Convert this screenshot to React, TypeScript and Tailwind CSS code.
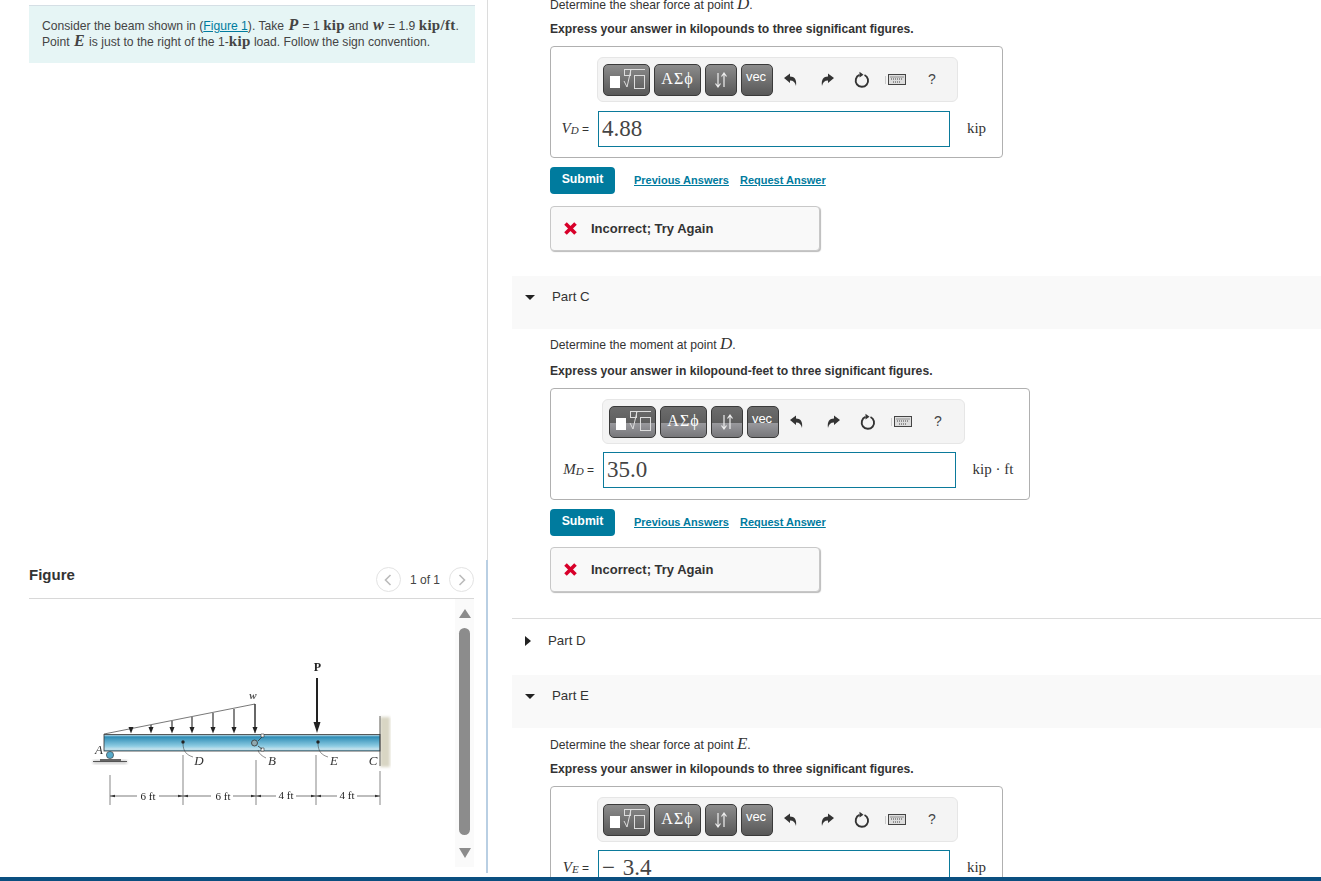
const serif = "[font-family:'Liberation_Serif',serif]";
const mathVar = `${serif} italic font-bold text-[16px] leading-none mx-[1px]`;
const mathUnit = `${serif} font-bold text-[15px] leading-none tracking-[0.3px]`;
const pointVar = `${serif} italic text-[17px] leading-none`;

function ToolBtn({ w, twoTone, children }: { w: string; twoTone?: boolean; children: React.ReactNode }) {
    const bg = twoTone
        ? 'bg-[linear-gradient(#6c6c6c_0%,#5e5e5e_54%,#98989c_55%,#77777a_100%)]'
        : 'bg-gradient-to-b from-[#8c8c8c] to-[#585858]'
    return (
        <div className={`${w} h-8 flex items-center justify-center rounded-[5px] border border-[#3a3a3a] ${bg} text-white`}>
            {children}
        </div>
    )
}

function Toolbar({ width, pad, twoTone }: { width: string; pad: string; twoTone?: boolean }) {
    return (
        <div className={`${width} ${pad} h-[45px] flex items-center rounded-md border border-[#e6e6e6] bg-[#f4f4f4]`}>
            <div className="flex gap-1">
                <ToolBtn w="w-[47px]" twoTone={twoTone}>
                    <svg width="45" height="30" viewBox="0 0 45 30">
                        <rect x="6" y="11" width="10" height="12" fill="#fff" />
                        <rect x="20.5" y="4.5" width="6" height="6" fill="none" stroke="#ddd" />
                        <path d="M20 16 L23 22 L27 4.5 H41" fill="none" stroke="#ddd" />
                        <rect x="30.5" y="10.5" width="10" height="13" fill="none" stroke="#ddd" />
                    </svg>
                </ToolBtn>
                <ToolBtn w="w-[47px]" twoTone={twoTone}>
                    <span className={`${serif} text-[16px] tracking-[1px] -mt-0.5`}>ΑΣϕ</span>
                </ToolBtn>
                <ToolBtn w="w-[32px]" twoTone={twoTone}>
                    <svg width="16" height="18" viewBox="0 0 16 18" fill="none" stroke="#eee" strokeWidth="1.2">
                        <path d="M5 2 V15 M2.5 12.5 L5 16 L7.5 12.5" />
                        <path d="M11 16 V3 M8.5 5.5 L11 2 L13.5 5.5" />
                    </svg>
                </ToolBtn>
                <ToolBtn w="w-[32px]" twoTone={twoTone}>
                    <span className="text-[13px] -mt-1.5 -ml-0.5">vec</span>
                </ToolBtn>
            </div>
            <svg className="ml-[10px]" width="16" height="16" viewBox="0 0 16 16" fill="#333">
                <path d="M1 6 L7 1.5 V4.5 C11.5 4.5 14 7.5 13 14 C12.3 10.5 10.5 8.5 7 8.5 V11 Z" />
            </svg>
            <svg className="ml-[20px]" width="16" height="16" viewBox="0 0 16 16" fill="#333">
                <path d="M15 6 L9 1.5 V4.5 C4.5 4.5 2 7.5 3 14 C3.7 10.5 5.5 8.5 9 8.5 V11 Z" />
            </svg>
            <svg className="ml-[18px]" width="18" height="18" viewBox="0 0 18 18" fill="none" stroke="#333" strokeWidth="1.9">
                <path d="M11.5 4 A6.2 6.2 0 1 1 6.5 3.9" />
                <path d="M6.5 0.8 L10.5 3.8 L6.5 6.5 Z" fill="#333" stroke="none" />
            </svg>
            <div className="ml-[14px] w-px h-[8px] bg-[#ccc]" />
            <svg className="ml-[2px]" width="18" height="11" viewBox="0 0 18 11" fill="#ddd" stroke="#444">
                <rect x="0.5" y="0.5" width="17" height="10" />
                <path d="M2.5 3 H15.5 M3 5 H15 M5 8 H13" strokeDasharray="1 1" />
            </svg>
            <span className="ml-[22px] text-[14px] text-[#444]">?</span>
        </div>
    )
}

function AnswerBox({ width, barWidth, barLeft, barPad, label, sub, value, unit, labelWidth, inputWidth, unitWidth, inputTop, twoTone }: {
    width: string; barWidth: string; barLeft: string; barPad: string; label: string; sub: string; value: string; unit: string
    labelWidth: string; inputWidth: string; unitWidth: string; inputTop: string; twoTone?: boolean
}) {
    return (
        <div className={`${width} h-28 shrink-0 rounded border border-[#b0b0b0] pt-[10px]`}>
            <div className={barLeft}>
                <Toolbar width={barWidth} pad={barPad} twoTone={twoTone} />
            </div>
            <div className={`flex items-center ${inputTop}`}>
                <div className={`${labelWidth} pr-[9px] text-right text-xs text-[#333] whitespace-nowrap shrink-0`}>
                    <span className={`${serif} italic text-[15px]`}>{label}</span>
                    <span className={`${serif} italic text-[11px] relative top-px`}>{sub}</span> =
                </div>
                <div className={`${inputWidth} h-[36px] shrink-0 border border-[#0b7a9b] pl-[3px] ${serif} text-[23px] leading-[34px] text-[#444]`}>{value}</div>
                <div className={`${unitWidth} text-center ${serif} text-[15px] text-[#333] shrink-0 -mt-0.5`}>{unit}</div>
            </div>
        </div>
    )
}

function SubmitRow() {
    return (
        <div className="flex items-center gap-[19px]">
            <div className="w-[65px] h-[27px] rounded-sm bg-[#007b9e] text-white text-[12.3px] font-bold flex items-center justify-center pb-0.5">Submit</div>
            <div className="flex gap-[11px] text-[11px] font-bold text-[#007b9e] underline">
                <span>Previous Answers</span>
                <span>Request Answer</span>
            </div>
        </div>
    )
}

function Feedback() {
    return (
        <div className="w-[270px] h-[45px] rounded border border-[#c8c8c8] bg-[#f9f9f9] shadow-[1px_1px_1px_#bbb] flex items-center pl-[13px] text-[13px] font-bold text-[#333]">
            <svg width="13" height="13" viewBox="0 0 13 13" stroke="#d8002a" strokeWidth="3.6">
                <path d="M1.5 1.5 L11.5 11.5 M11.5 1.5 L1.5 11.5" />
            </svg>
            <span className="ml-[14px] mt-px">Incorrect; Try Again</span>
        </div>
    )
}

function PartHeader({ name }: { name: string }) {
    return (
        <div className="h-[53px] shrink-0 bg-[#f9f9f9] flex items-center pl-[13px] pb-[11px] text-[13.3px] text-[#333]">
            <div className="w-0 h-0 border-x-[5px] border-x-transparent border-t-[5px] border-t-[#222]" />
            <span className="ml-[17px]">{name}</span>
        </div>
    )
}

function Beam() {
    const load = [[131, 729], [151, 725], [172, 721], [192, 717], [213, 713], [234, 709], [255, 704]]
    const dims = [[110, 775], [183, 755], [256, 760], [316, 755], [380, 771]]
    return (
        <svg width="310" height="170" viewBox="90 650 310 170" className="blur-[0.3px] [font-family:'Liberation_Serif',serif]">
            <defs>
                <linearGradient id="beamFill" x1="0" y1="0" x2="0" y2="1">
                    <stop offset="0" stopColor="#d8e8ee" />
                    <stop offset="0.15" stopColor="#2f8db6" />
                    <stop offset="0.7" stopColor="#8ccbe2" />
                    <stop offset="0.9" stopColor="#c8e4ee" />
                    <stop offset="1" stopColor="#5aa6c6" />
                </linearGradient>
                <filter id="soft"><feGaussianBlur stdDeviation="1.5" /></filter>
            </defs>
            <rect x="380" y="717" width="10" height="50" fill="#d9d6c4" filter="url(#soft)" />
            <rect x="93" y="760" width="34" height="4" fill="#ccc" filter="url(#soft)" />
            <rect x="104" y="734.5" width="276" height="16.5" fill="url(#beamFill)" stroke="#333" strokeWidth="0.8" />
            <path d="M380 716 V766" stroke="#444" strokeWidth="0.8" />
            <circle cx="110" cy="755" r="3.6" fill="#56a9c9" stroke="#333" strokeWidth="0.6" />
            <path d="M100 759 H121 V761 H100 Z" fill="#666" />
            <path d="M93 761.5 H127" stroke="#333" strokeWidth="0.8" />
            <path d="M104 734 L255 704 V733" fill="none" stroke="#555" strokeWidth="0.8" />
            {load.map(([x, y]) => (
                <g key={x}>
                    <path d={`M${x} ${y} V731`} stroke="#222" strokeWidth="1.1" />
                    <path d={`M${x - 2.5} 727 H${x + 2.5} L${x} 733.5 Z`} fill="#222" />
                </g>
            ))}
            <path d="M317 678 V726" stroke="#222" strokeWidth="2" />
            <path d="M313.5 722 H320.5 L317 733 Z" fill="#222" />
            <path d="M261 734 H264 V737 H261 Z M261 748 H264 V751 H261 Z" fill="#fff" stroke="#333" strokeWidth="0.6" />
            <circle cx="254.5" cy="743" r="3" fill="#8fa9b0" stroke="#333" strokeWidth="0.8" />
            <path d="M258 741 L262 737 M258 746 L262 749" stroke="#333" strokeWidth="0.8" />
            <circle cx="183" cy="742" r="1.7" fill="#222" />
            <circle cx="318" cy="742" r="1.7" fill="#222" />
            <path d="M183 743 C183 752 187 755 193 757 M258 750 C259 754 262 756 266 758 M318 743 C318 752 322 755 328 757" fill="none" stroke="#444" strokeWidth="0.6" />
            {dims.map(([x, y]) => <path key={x} d={`M${x} ${y} V805`} stroke="#555" strokeWidth="0.7" />)}
            <path d="M110 796 H137 M159 796 H183 M183 796 H211 M233 796 H256 M256 796 H276 M296 796 H316 M316 796 H337 M357 796 H380" stroke="#444" strokeWidth="0.7" />
            {[110, 183, 256, 316].map(x => <path key={x} d={`M${x} 796 l5 -1.2 v2.4 Z`} fill="#333" />)}
            {[183, 256, 316, 380].map(x => <path key={x} d={`M${x} 796 l-5 -1.2 v2.4 Z`} fill="#333" />)}
            <g fontSize="11" fill="#222" textAnchor="middle">
                <text x="148" y="800">6 ft</text>
                <text x="223" y="800">6 ft</text>
                <text x="286" y="799">4 ft</text>
                <text x="347" y="799">4 ft</text>
                <text x="317.5" y="671" fontSize="12" fontWeight="bold">P</text>
                <text x="253" y="699" fontSize="11" fontStyle="italic" fontWeight="bold" fill="#555">w</text>
            </g>
            <g fontSize="13" fill="#333" fontStyle="italic" textAnchor="middle">
                <text x="99" y="754">A</text>
                <text x="199" y="765">D</text>
                <text x="272" y="765">B</text>
                <text x="334" y="765">E</text>
                <text x="373" y="765">C</text>
            </g>
        </svg>
    )
}

function Chevron({ dir }: { dir: 'l' | 'r' }) {
    return (
        <div className="w-[25px] h-[25px] rounded-full border border-[#e3e3e3] flex items-center justify-center">
            <svg width="10" height="14" viewBox="0 0 10 14" fill="none" stroke="#bbb" strokeWidth="1.6">
                <path d={dir === 'l' ? 'M7.5 2 L2.5 7 L7.5 12' : 'M2.5 2 L7.5 7 L2.5 12'} />
            </svg>
        </div>
    )
}

function App() {
    return (
        <div className="w-[1321px] h-[881px] overflow-hidden flex flex-col bg-white text-[#333] text-[12.15px] [font-family:'Liberation_Sans',Arial,sans-serif]">
            <div className="flex-1 min-h-0 flex">
                {/* left column */}
                <div className="w-[486px] shrink-0 h-[873px] pl-[29px] pr-[12px] pt-[5px] flex flex-col">
                    <div className="h-[58px] -mr-px bg-[#e6f5f5] border-t border-[#d5dfe5] pl-[13px] pt-[11px] text-[12.15px] leading-[16px] text-[#444] whitespace-nowrap">
                        <div className="h-[16px]">
                            Consider the beam shown in (<span className="text-[#007b9e] underline">Figure 1</span>). Take <span className={mathVar}>P</span> = 1 <span className={mathUnit}>kip</span> and <span className={mathVar}>w</span> = 1.9 <span className={mathUnit}>kip/ft</span>.
                        </div>
                        <div className="h-[16px]">
                            Point <span className={mathVar}>E</span> is just to the right of the 1-<span className={mathUnit}>kip</span> load. Follow the sign convention.
                        </div>
                    </div>
                    <div className="mt-[504px] h-[32px] flex items-start justify-between border-b border-[#d8d8d8]">
                        <span className="text-[15px] font-bold text-[#333] leading-[16px]">Figure</span>
                        <div className="flex items-center gap-[9px]">
                            <Chevron dir="l" />
                            <span className="text-xs text-[#444]">1 of 1</span>
                            <Chevron dir="r" />
                        </div>
                    </div>
                    <div className="flex-1 flex">
                        <div className="flex-1 pl-[61px] pt-[51px]">
                            <Beam />
                        </div>
                        <div className="w-[19px] h-[268px] bg-[#fafafa] flex flex-col items-center pt-[10px]">
                            <div className="w-0 h-0 border-x-[6.5px] border-x-transparent border-b-[9px] border-b-[#8c8c8c]" />
                            <div className="w-[11px] h-[207px] mt-[10px] rounded-full bg-[#8c8c8c]" />
                            <div className="w-0 h-0 mt-[13px] border-x-[6.5px] border-x-transparent border-t-[10px] border-t-[#8c8c8c]" />
                        </div>
                    </div>
                </div>

                {/* divider between the panes */}
                <div className="w-[2px] shrink-0 flex flex-col items-end">
                    <div className="w-px h-[560px] bg-[#dcdcdc]" />
                    <div className="w-[2px] h-[313px] bg-[#b9cfe3]" />
                </div>

                {/* right column */}
                <div className="flex-1 min-w-0 overflow-hidden pl-6 flex flex-col">
                    <div className="pl-[38px] -mt-[5px] h-[281px] shrink-0">
                        <div className="h-[16px] leading-[16px]">Determine the shear force at point <span className={pointVar}>D</span>.</div>
                        <div className="mt-[10px] font-bold h-[16px] leading-[16px]">Express your answer in kilopounds to three significant figures.</div>
                        <div className="mt-[9px]">
                            <AnswerBox width="w-[453px]" barWidth="w-[361px]" barLeft="pl-[46px]" barPad="pl-[5px]" label="V" sub="D" value="4.88" unit="kip" labelWidth="w-[47px]" inputWidth="w-[352px]" unitWidth="w-[53px]" inputTop="mt-[9px]" />
                        </div>
                        <div className="mt-[9px]"><SubmitRow /></div>
                        <div className="mt-[12px]"><Feedback /></div>
                    </div>
                    <PartHeader name="Part C" />
                    <div className="pl-[38px] h-[289px] shrink-0 pt-[6px]">
                        <div className="h-[16px] leading-[16px]">Determine the moment at point <span className={pointVar}>D</span>.</div>
                        <div className="mt-[12px] font-bold h-[16px] leading-[16px]">Express your answer in kilopound-feet to three significant figures.</div>
                        <div className="mt-[9px]">
                            <AnswerBox width="w-[480px]" barWidth="w-[363px]" barLeft="pl-[51px]" barPad="pl-[6px]" label="M" sub="D" value="35.0" unit="kip · ft" labelWidth="w-[52px]" inputWidth="w-[353px]" unitWidth="w-[74px]" inputTop="mt-[8px]" twoTone />
                        </div>
                        <div className="mt-[9px]"><SubmitRow /></div>
                        <div className="mt-[11px]"><Feedback /></div>
                    </div>
                    <div className="h-[57px] shrink-0 border-t border-[#dcdcdc] flex items-center pl-[13px] pb-[13px] text-[13.3px] text-[#333]">
                        <div className="w-0 h-0 border-y-[5px] border-y-transparent border-l-[6px] border-l-[#222]" />
                        <span className="ml-[17px]">Part D</span>
                    </div>
                    <PartHeader name="Part E" />
                    <div className="pl-[38px] pt-[7px]">
                        <div className="h-[16px] leading-[16px]">Determine the shear force at point <span className={pointVar}>E</span>.</div>
                        <div className="mt-[10px] font-bold h-[16px] leading-[16px]">Express your answer in kilopounds to three significant figures.</div>
                        <div className="mt-[9px] h-[91px] overflow-hidden">
                            <AnswerBox width="w-[453px]" barWidth="w-[361px]" barLeft="pl-[46px]" barPad="pl-[5px]" label="V" sub="E" value={'−\u00a0\u200a3.4'} unit="kip" labelWidth="w-[47px]" inputWidth="w-[352px]" unitWidth="w-[53px]" inputTop="mt-[8px]" />
                        </div>
                    </div>
                </div>
            </div>
            <div className="h-[4px] shrink-0 bg-[#0b4f80]" />
        </div>
    )
}

export default App
